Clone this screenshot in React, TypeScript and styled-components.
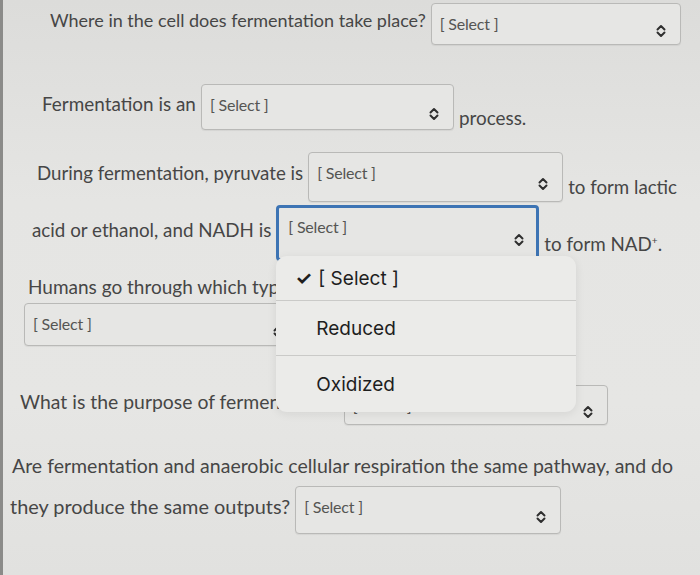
import React from "react";
import styled, { createGlobalStyle } from "styled-components";

const Global = createGlobalStyle`
  html, body { margin: 0; padding: 0; }
  body { width: 700px; height: 575px; overflow: hidden; background: #e2e2e0; }
`;

const Page = styled.div`
  width: 700px;
  height: 575px;
  box-sizing: border-box;
  overflow: hidden;
  border-left: 3px solid #8b8b89;
  background: linear-gradient(180deg, #dcdcda 0%, #e5e5e3 35%, #e6e6e4 70%, #e1e1df 100%);
  font-family: Lato, "Open Sans", sans-serif;
  color: #464646;
  position: relative;
`;

const Row = styled.div<{ $indent: number; $top: number }>`
  display: flex;
  align-items: center;
  gap: 5px;
  padding-left: ${(p) => p.$indent}px;
  margin-top: ${(p) => p.$top}px;
`;

const Block = styled.div<{ $indent: number; $top: number }>`
  padding-left: ${(p) => p.$indent}px;
  margin-top: ${(p) => p.$top}px;
`;

const Lead = styled.span<{ $size?: number }>`
  font-size: ${(p) => p.$size ?? 18}px;
  white-space: nowrap;
  padding-bottom: 8px;
`;

const Trail = styled.span<{ $size?: number }>`
  font-size: ${(p) => p.$size ?? 18}px;
  white-space: nowrap;
  padding-top: 20px;
`;

const Line = styled.div<{ $size?: number }>`
  font-size: ${(p) => p.$size ?? 18}px;
  white-space: nowrap;
`;

const SelectBox = styled.div<{ $w: number; $h: number; $focused?: boolean }>`
  position: relative;
  flex: none;
  box-sizing: border-box;
  width: ${(p) => p.$w}px;
  height: ${(p) => p.$h}px;
  border: ${(p) => (p.$focused ? "3px solid #3d74b4" : "1px solid #b9b9b7")};
  border-radius: 4px;
  background: #e6e6e4;
  box-shadow: 0 1px 1px rgba(0, 0, 0, 0.06);
  display: flex;
  align-items: flex-start;
  justify-content: space-between;
  padding: ${(p) => (p.$focused ? "9px 12px 0 9px" : "10px 14px 0 8px")};
`;

const Placeholder = styled.span`
  font-size: 16px;
  color: #555553;
  letter-spacing: -0.2px;
`;

const Arrow = styled.svg`
  align-self: center;
  margin-top: 4px;
  flex: none;
`;

const Menu = styled.div`
  position: absolute;
  left: -3px;
  top: 48px;
  width: 300px;
  background: #ebebe9;
  border-radius: 11px;
  box-shadow: 0 2px 10px rgba(0, 0, 0, 0.08);
  overflow: hidden;
  z-index: 5;
  font-family: Inter, "Noto Sans", sans-serif;
`;

const MenuItem = styled.div<{ $h: number; $last?: boolean }>`
  height: ${(p) => p.$h}px;
  box-sizing: border-box;
  display: flex;
  align-items: center;
  padding-left: 19px;
  font-size: 19px;
  color: #1e1e1e;
  border-bottom: ${(p) => (p.$last ? "none" : "1px solid #cacac8")};
`;

const Check = styled.span`
  width: 23px;
  font-size: 19px;
  font-weight: 700;
`;

const ItemText = styled.span<{ $pad?: boolean }>`
  padding-left: ${(p) => (p.$pad ? 21 : 0)}px;
`;

const Sup = styled.sup`
  font-size: 10px;
`;

function Chevrons() {
  return (
    <Arrow width="10" height="14" viewBox="0 0 10 14">
      <path d="M1.5 5.5 L5 2 L8.5 5.5 M1.5 8.5 L5 12 L8.5 8.5" fill="none" stroke="#2f2f2f" strokeWidth="2" strokeLinecap="round" strokeLinejoin="round" />
    </Arrow>
  );
}

function Select({ w, h, focused, children }: { w: number; h: number; focused?: boolean; children?: React.ReactNode }) {
  return (
    <SelectBox $w={w} $h={h} $focused={focused}>
      <Placeholder>[ Select ]</Placeholder>
      <Chevrons />
      {children}
    </SelectBox>
  );
}

export default function App() {
  return (
    <>
      <Global />
      <Page>
        <Row $indent={47} $top={3}>
          <Lead>Where in the cell does fermentation take place?</Lead>
          <Select w={250} h={42} />
        </Row>
        <Row $indent={39} $top={39}>
          <Lead $size={18.9}>Fermentation is an</Lead>
          <Select w={253} h={46} />
          <Trail $size={18.9}>process.</Trail>
        </Row>
        <Row $indent={34} $top={22}>
          <Lead $size={18.7}>During fermentation, pyruvate is</Lead>
          <Select w={255} h={50} />
          <Trail $size={18.7}>to form lactic</Trail>
        </Row>
        <Row $indent={29} $top={3}>
          <Lead $size={18.8}>acid or ethanol, and NADH is</Lead>
          <Select w={263} h={56} focused>
            <Menu>
              <MenuItem $h={45}>
                <Check>✓</Check>
                <ItemText>[ Select ]</ItemText>
              </MenuItem>
              <MenuItem $h={55}>
                <ItemText $pad>Reduced</ItemText>
              </MenuItem>
              <MenuItem $h={56} $last>
                <ItemText $pad>Oxidized</ItemText>
              </MenuItem>
            </Menu>
          </Select>
          <Trail $size={18.8}>
            to form NAD<Sup>+</Sup>.
          </Trail>
        </Row>
        <Block $indent={25} $top={14}>
          <Line $size={19}>Humans go through which type of fermentation?</Line>
        </Block>
        <Block $indent={21} $top={5}>
          <Select w={274} h={43} />
        </Block>
        <Row $indent={17} $top={39}>
          <Lead $size={19.4}>What is the purpose of fermentation?</Lead>
          <Select w={264} h={40} />
        </Row>
        <Block $indent={9} $top={29}>
          <Line $size={19.5}>Are fermentation and anaerobic cellular respiration the same pathway, and do</Line>
        </Block>
        <Row $indent={7} $top={9}>
          <Lead $size={19.9}>they produce the same outputs?</Lead>
          <Select w={266} h={48} />
        </Row>
      </Page>
    </>
  );
}
